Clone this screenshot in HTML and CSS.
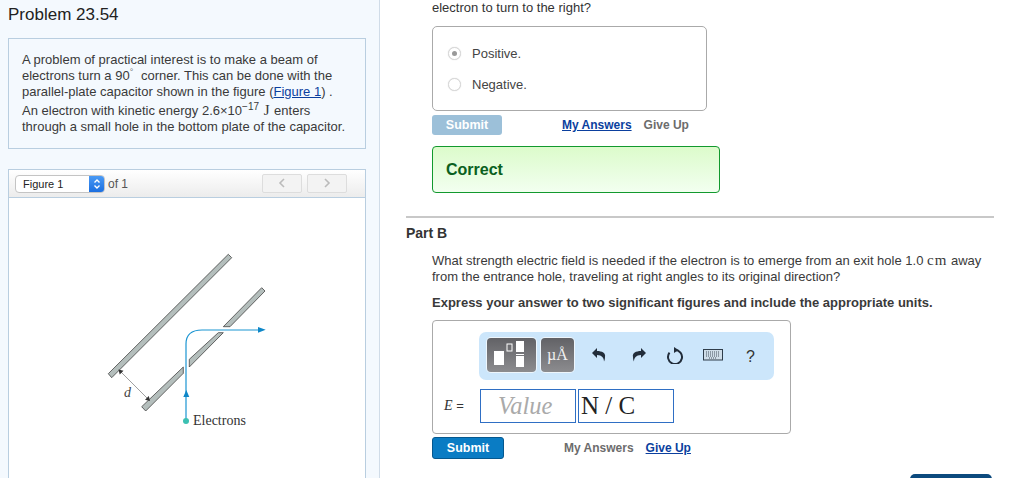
FILE: index.html
```html
<!DOCTYPE html>
<html lang="en">
<head>
<meta charset="utf-8">
<title>Problem 23.54</title>
<link rel="stylesheet" href="styles.css">
</head>
<body>
<div class="page">
  <aside class="side">
    <h1 class="title">Problem 23.54</h1>
    <div class="intro">
      <p>A problem of practical interest is to make a beam of electrons turn a 90<sup class="deg">&deg;</sup> corner. This can be done with the parallel-plate capacitor shown in the figure (<a class="link" href="#">Figure 1</a>) .<span class="intro-line">An electron with kinetic energy 2.6&times;10<sup class="exp">&minus;17</sup> <span class="serif unit-j">J</span> enters</span>through a small hole in the bottom plate of the capacitor.</p>
    </div>
    <div class="figure">
      <div class="figbar">
        <div class="select"><span class="select-label">Figure 1</span><span class="select-arrows"><svg width="10" height="14" viewBox="0 0 10 14"><path d="M2.5 5.5 5 3l2.500 2.500M2.500 8.500 5 11l2.500-2.500" fill="none" stroke="#fff" stroke-width="1.400"/></svg></span></div>
        <span class="of">of 1</span>
        <div class="pager">
          <span class="pagebtn"><svg width="8" height="10" viewBox="0 0 8 10"><path d="M6 1 2 5l4 4" fill="none" stroke="#bbb" stroke-width="1.600"/></svg></span>
          <span class="pagebtn"><svg width="8" height="10" viewBox="0 0 8 10"><path d="m2 1 4 4-4 4" fill="none" stroke="#bbb" stroke-width="1.600"/></svg></span>
        </div>
      </div>
      <div class="figbody">
        <svg class="diagram" width="200" height="200" viewBox="0 0 200 200">
          <g fill="#b4bebc" stroke="#444" stroke-width=".8">
            <path d="M18.300 132.700 138.300 13.300l3.400 3.400L21.700 136.700z"/>
            <path d="M51.700 165.700 93.300 126v6.300L55.700 170z"/>
            <path d="M99.300 118.300 128.300 91.700h5L99.300 126z"/>
            <path d="M133.300 85.700 171.700 46.700l3.300 3.300-35 35.700z"/>
          </g>
          <path d="M29.300 129.300 59.300 159.300" stroke="#777" stroke-width=".7"/>
          <path d="m28.500 128.500 5 1.200-3.800 3.800zM60 160l-5-1.200 3.800-3.800z" fill="#333"/>
          <text class="d" x="34" y="156">d</text>
          <path d="M96 180V103Q96 89 112 89H170" fill="none" stroke="#1b95d2" stroke-width="1.200"/>
          <path d="M96.300 149l3 7h-6zM175.700 88.700 168 86v5.700z" fill="#0f87c8"/>
          <circle cx="96" cy="180" r="3" fill="#3cc0b2"/>
          <text class="elec" x="103" y="184">Electrons</text>
        </svg>
      </div>
    </div>
  </aside>
  <main class="main">
    <p class="lead">electron to turn to the right?</p>
    <div class="choices">
      <label class="choice"><span class="radio radio-on"></span>Positive.</label>
      <label class="choice"><span class="radio"></span>Negative.</label>
    </div>
    <div class="actions first">
      <span class="btn btn-off">Submit</span>
      <a class="act act-link" href="#">My Answers</a>
      <span class="act act-grey">Give Up</span>
    </div>
    <div class="correct">Correct</div>
    <hr class="rule">
    <h2 class="part">Part B</h2>
    <p class="q">What strength electric field is needed if the electron is to emerge from an exit hole 1.0 <span class="serif unit-cm">cm</span> away from the entrance hole, traveling at right angles to its original direction?</p>
    <p class="q q-bold">Express your answer to two significant figures and include the appropriate units.</p>
    <div class="answer">
      <div class="toolbar">
        <span class="tool tool-wide">
          <svg width="49" height="34" viewBox="0 0 49 34"><g fill="#fff"><rect x="7" y="13" width="10" height="14"/><rect x="20" y="6" width="5" height="7" fill="none" stroke="#fff"/><rect x="29" y="3" width="8" height="11"/><rect x="29" y="16" width="8" height="1"/><rect x="29" y="18" width="8" height="11"/></g></svg>
        </span>
        <span class="tool tool-unit">&micro;&Aring;</span>
        <span class="icons">
          <svg width="16" height="16" viewBox="0 0 16 16"><path d="M1 6 6 1V4C11 4 15 6 14 10 14 12 13.500 13.500 13 14.500 13 11 11 8 6 8V11z" fill="#222d3a"/></svg>
          <svg class="redo" width="16" height="16" viewBox="0 0 16 16"><path d="M15 6 10 1V4C5 4 1 6 2 10 2 12 2.500 13.500 3 14.500 3 11 5 8 10 8V11z" fill="#222d3a"/></svg>
          <svg width="18" height="18" viewBox="0 0 18 18"><path d="M9 4A7 7 0 1 1 3.500 6.700" fill="none" stroke="#222d3a" stroke-width="2"/><path d="M8 1 12.500 4 8 7z" fill="#222d3a"/></svg>
          <svg width="20" height="12" viewBox="0 0 20 12"><rect x=".5" y=".5" width="19" height="10.500" fill="#cfdde8" stroke="#2f3d4a"/><path d="M3 3h14M3 5h14M3 7h14M6 9h8" stroke="#46535f" stroke-dasharray="1 1"/></svg>
          <span class="help">?</span>
        </span>
      </div>
      <div class="entry">
        <span class="var"><i class="serif">E</i> =</span>
        <span class="field field-value">Value</span>
        <span class="field field-unit">N / C</span>
      </div>
    </div>
    <div class="actions second">
      <span class="btn btn-on">Submit</span>
      <span class="act act-grey">My Answers</span>
      <a class="act act-link" href="#">Give Up</a>
    </div>
    <span class="next"></span>
  </main>
</div>
</body>
</html>
```
FILE: styles.css
```css
html, body { margin: 0; padding: 0; height: 478px; overflow: hidden; background: #fff; }
body { font-family: "Liberation Sans", Arial, sans-serif; font-size: 13px; color: #333; }
.page { display: flex; height: 478px; overflow: hidden; }
.side { width: 380px; flex: none; background: #f4f9fe; border-right: 1px solid #d0dce8; padding: 0 13px 0 8px; box-sizing: border-box; display: flex; flex-direction: column; }
.title { margin: 6px 0 0; font-size: 17px; font-weight: 400; line-height: 18px; color: #222; }
.intro { margin-top: 14px; height: 111px; box-sizing: border-box; border: 1px solid #b9cee0; padding: 13px 13px 0; }
.intro p { margin: 0; font-size: 13px; line-height: 16px; color: #3a3a3a; }
.intro-line { display: block; margin-top: 3px; }
.deg { font-size: 9px; line-height: 0; color: #777; margin-right: 4px; }
.exp { font-size: 10px; line-height: 0; }
.serif { font-family: "Liberation Serif", serif; }
.unit-j { font-size: 15px; line-height: 0; margin: 0 1px; }
.unit-cm { font-size: 15px; line-height: 0; letter-spacing: 1px; }
.link { color: #0b3f9e; }
.figure { margin-top: 20px; flex: 1; border: 1px solid #b9cee0; border-bottom: 0; background: #fff; }
.figbar { height: 28px; box-sizing: border-box; border-bottom: 1px solid #b9cee0; background: linear-gradient(#fff, #ececec); display: flex; align-items: center; padding: 1px 0 0 6px; }
.select { display: flex; width: 90px; height: 18px; box-sizing: border-box; border: 1px solid #c4c4c4; border-radius: 4px; background: #fff; overflow: hidden; }
.select-label { flex: 1; font-size: 11px; line-height: 16px; padding-left: 7px; color: #222; }
.select-arrows { width: 15px; background: linear-gradient(#4a9af5, #1b6fe0); display: flex; align-items: center; justify-content: center; }
.of { margin-left: 3px; font-size: 12px; color: #555; }
.pager { margin-left: auto; margin-right: 18px; margin-top: -2px; display: flex; gap: 5px; }
.pagebtn { width: 40px; height: 19px; box-sizing: border-box; border: 1px solid #ddd; border-radius: 2px; display: flex; align-items: center; justify-content: center; background: #f3f3f3; }
.figbody { padding: 43px 0 0 81px; }
.diagram { display: block; }
.d { font: italic 14px "Liberation Serif", serif; fill: #444; }
.elec { font: 14px "Liberation Serif", serif; fill: #333; }
.main { flex: 1; padding: 0 16px 0 26px; position: relative; min-width: 0; }
.lead { margin: 0 0 0 26px; line-height: 16px; font-size: 13px; }
.choices { margin: 10px 0 0 26px; width: 275px; height: 85px; box-sizing: border-box; border: 1px solid #aaa; border-radius: 5px; padding: 11px 0 0 15px; }
.choice { display: flex; align-items: center; height: 31px; font-size: 13px; color: #444; }
.radio { width: 13px; height: 13px; box-sizing: border-box; border: 1px solid #d8d8d8; border-radius: 50%; background: #fff; margin-right: 11px; display: flex; align-items: center; justify-content: center; box-shadow: 0 0 1px #ccc; }
.radio-on::after { content: ""; width: 5px; height: 5px; border-radius: 50%; background: #999; }
.actions { display: flex; align-items: center; margin-left: 26px; height: 22px; font-size: 12px; font-weight: 700; }
.actions.first { margin-top: 3px; }
.actions.second { margin-top: 3px; }
.btn { box-sizing: border-box; text-align: center; color: #fff; border-radius: 3px; font-size: 12.500px; }
.btn-off { width: 70px; height: 20px; line-height: 20px; background: #9cc0d9; }
.btn-on { width: 72px; height: 22px; line-height: 20px; background: #0a7cc4; border: 1px solid #05588f; }
.act { white-space: nowrap; }
.act-link { color: #0b3f9e; text-decoration: underline; }
.act-grey { color: #6c6c6c; }
.first .act-link { margin-left: 60px; }
.first .act-grey { margin-left: 12px; }
.second .act-grey { margin-left: 60px; }
.second .act-link { margin-left: 12px; }
.correct { margin: 10px 0 0 26px; width: 288px; height: 47px; box-sizing: border-box; border: 1px solid #12992e; border-radius: 4px; background: linear-gradient(#dcfbcb, #f2fff0); color: #0a6020; font-size: 16px; font-weight: 700; line-height: 45px; padding-left: 13px; }
.rule { margin: 23px 0 0; height: 2px; border: 0; background: #c8c8c8; }
.part { margin: 7px 0 0; font-size: 14px; font-weight: 700; line-height: 16px; color: #333; }
.q { margin: 12px 0 0 26px; max-width: 555px; font-size: 13px; line-height: 16px; color: #3a3a3a; }
.q-bold { margin-top: 10px; font-weight: 700; }
.answer { margin: 9px 0 0 26px; width: 359px; height: 114px; box-sizing: border-box; border: 1px solid #aaa; border-radius: 4px; }
.toolbar { margin: 11px 0 0 46px; width: 295px; height: 48px; box-sizing: border-box; background: #cce6fb; border-radius: 7px; padding: 6px 0 0 8px; display: flex; align-items: flex-start; gap: 5px; }
.tool { display: flex; align-items: center; justify-content: center; height: 34px; box-sizing: border-box; border-radius: 4px; background: linear-gradient(#626266, #8c8c8f); box-shadow: 0 0 0 1px #eef6fc; }
.tool-wide { width: 49px; }
.tool-unit { width: 33px; color: #f2f2f2; font: 16px "Liberation Serif", serif; }
.icons { display: flex; align-items: center; height: 34px; margin-left: 12px; gap: 19px; }
.redo { margin-left: 5px; }
.help { font-size: 16px; color: #333; margin-left: 4px; line-height: 18px; margin-top: 3px; }
.entry { display: flex; align-items: center; margin-top: 9px; }
.var { width: 47px; padding-left: 11px; box-sizing: border-box; font-size: 13px; color: #333; }
.var .serif { font-size: 14px; }
.field { width: 96px; height: 34px; box-sizing: border-box; border: 1px solid #2f6fc4; font-family: "Liberation Serif", serif; font-size: 25px; line-height: 31px; }
.field-value { color: #aaa; font-style: italic; font-size: 24.500px; padding-left: 17px; margin-right: 2px; }
.field-unit { color: #222; padding-left: 2px; }
.next { position: absolute; left: 530px; top: 474px; width: 82px; height: 20px; border-radius: 5px 5px 0 0; background: #0c4a7e; }
```
